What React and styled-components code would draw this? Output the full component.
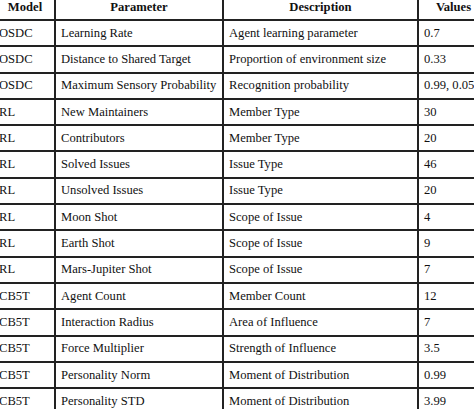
import React from 'react';
import styled, { createGlobalStyle } from 'styled-components';

const rows = [
	['OSDC', 'Learning Rate', 'Agent learning parameter', '0.7'],
	['OSDC', 'Distance to Shared Target', 'Proportion of environment size', '0.33'],
	['OSDC', 'Maximum Sensory Probability', 'Recognition probability', '0.99, 0.05'],
	['RL', 'New Maintainers', 'Member Type', '30'],
	['RL', 'Contributors', 'Member Type', '20'],
	['RL', 'Solved Issues', 'Issue Type', '46'],
	['RL', 'Unsolved Issues', 'Issue Type', '20'],
	['RL', 'Moon Shot', 'Scope of Issue', '4'],
	['RL', 'Earth Shot', 'Scope of Issue', '9'],
	['RL', 'Mars-Jupiter Shot', 'Scope of Issue', '7'],
	['CB5T', 'Agent Count', 'Member Count', '12'],
	['CB5T', 'Interaction Radius', 'Area of Influence', '7'],
	['CB5T', 'Force Multiplier', 'Strength of Influence', '3.5'],
	['CB5T', 'Personality Norm', 'Moment of Distribution', '0.99'],
	['CB5T', 'Personality STD', 'Moment of Distribution', '3.99'],
];

const GlobalStyle = createGlobalStyle`
	html, body {
		margin: 0;
		padding: 0;
		background: #fff;
		overflow: hidden;
	}
`;

export default function App() {
	return (
		<>
			<GlobalStyle />
			<Page>
				<Table>
					<colgroup>
						<col style={{ width: 59 }} />
						<col style={{ width: 168 }} />
						<col style={{ width: 195 }} />
						<col style={{ width: 70 }} />
					</colgroup>
					<thead>
						<HeadRow>
							<Head>Model</Head>
							<Head>Parameter</Head>
							<Head>Description</Head>
							<Head>Values</Head>
						</HeadRow>
					</thead>
					<tbody>
						{rows.map((r, i) => (
							<Row key={i}>
								{r.map((c, j) => (
									<Cell key={j}>{c}</Cell>
								))}
							</Row>
						))}
					</tbody>
				</Table>
			</Page>
		</>
	);
}

const Page = styled.div`
	width: 474px;
	height: 409px;
	overflow: hidden;
`;

const Table = styled.table`
	margin-left: -4px;
	border-collapse: collapse;
	table-layout: fixed;
	width: 492px;
	font-family: 'Liberation Serif', 'Times New Roman', serif;
	font-size: 12.6px;
	color: #111;
`;

const HeadRow = styled.tr`
	height: 20px;
`;

const Head = styled.th`
	padding: 0 4px;
	font-weight: bold;
	text-align: center;
	line-height: 14px;
	vertical-align: top;
	border-left: 2px solid #222;
	border-bottom: 2px solid #222;
	&:first-child {
		border-left: none;
	}
`;

const Row = styled.tr`
	height: 26.3px;
`;

const Cell = styled.td`
	padding: 0 4px 0 5px;
	white-space: nowrap;
	overflow: hidden;
	vertical-align: middle;
	border-left: 2px solid #222;
	border-bottom: 2px solid #222;
	&:first-child {
		border-left: none;
		padding-left: 3px;
	}
`;
